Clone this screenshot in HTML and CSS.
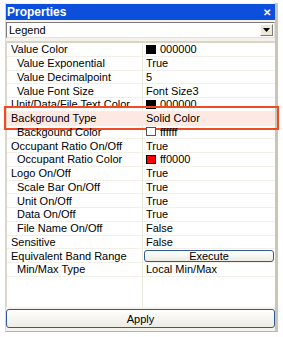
FILE: index.html
```html
<!DOCTYPE html>
<html lang="en">
  <head>
    <meta charset="UTF-8" />
    <title>Properties</title>
    <link rel="stylesheet" href="styles.css">
  </head>
  <body>
    <div class="panel">
      <div class="title-bar">
        <span class="title">Properties</span>
        <span class="close">&#x2715;</span>
      </div>
      <div class="combo">
        <span class="combo-text">Legend</span>
        <span class="combo-btn">
          <svg width="7" height="4" viewBox="0 0 7 4"><polygon points="0,0 7,0 3.5,4" fill="#000"/></svg>
        </span>
      </div>
      <div class="grid">
        <div class="row"><span class="name">Value Color</span><span class="value"><i class="swatch black"></i>000000</span></div>
        <div class="row"><span class="name sub">Value Exponential</span><span class="value">True</span></div>
        <div class="row"><span class="name sub">Value Decimalpoint</span><span class="value">5</span></div>
        <div class="row"><span class="name sub">Value Font Size</span><span class="value">Font Size3</span></div>
        <div class="row"><span class="name">Unit/Data/File Text Color</span><span class="value"><i class="swatch black"></i>000000</span></div>
        <div class="row marked"><span class="name">Background Type</span><span class="value">Solid Color</span></div>
        <div class="row"><span class="name sub">Backgound Color</span><span class="value"><i class="swatch white"></i>ffffff</span></div>
        <div class="row"><span class="name">Occupant Ratio On/Off</span><span class="value">True</span></div>
        <div class="row"><span class="name sub">Occupant Ratio Color</span><span class="value"><i class="swatch red"></i>ff0000</span></div>
        <div class="row"><span class="name">Logo On/Off</span><span class="value">True</span></div>
        <div class="row"><span class="name sub">Scale Bar On/Off</span><span class="value">True</span></div>
        <div class="row"><span class="name sub">Unit On/Off</span><span class="value">True</span></div>
        <div class="row"><span class="name sub">Data On/Off</span><span class="value">True</span></div>
        <div class="row"><span class="name sub">File Name On/Off</span><span class="value">False</span></div>
        <div class="row"><span class="name">Sensitive</span><span class="value">False</span></div>
        <div class="row"><span class="name">Equivalent Band Range</span><span class="value"><button class="exec-btn">Execute</button></span></div>
        <div class="row"><span class="name sub">Min/Max Type</span><span class="value">Local Min/Max</span></div>
      </div>
      <button class="apply-btn">Apply</button>
    </div>
  </body>
</html>
```

FILE: styles.css
```css
body {
  margin: 0;
  background: #ffffff;
  font-family: "Liberation Sans", Arial, sans-serif;
  font-size: 11px;
  color: #000;
}
.panel {
  width: 273px;
  height: 329px;
  margin: 3px 0 0 5px;
  box-sizing: border-box;
  border-right: 3px solid #c9c6b8;
  border-bottom: 1px solid #b8b5a8;
  border-left: 1px solid #dcdad0;
  background: #f4f2ea;
  display: flex;
  flex-direction: column;
}
.title-bar {
  height: 16px;
  margin-top: 1px;
  background: #0c4fdc;
  color: #fff;
  display: flex;
  align-items: center;
  justify-content: space-between;
  padding: 0 4px 0 1px;
}
.title {
  font-weight: bold;
  font-size: 12px;
}
.close {
  font-size: 10px;
  font-weight: bold;
}
.combo {
  height: 16px;
  margin-top: 2px;
  box-sizing: border-box;
  background: #fff;
  border-top: 1px solid #7a7a7a;
  border-left: 1px solid #7a7a7a;
  border-right: 1px solid #e4e2da;
  border-bottom: 1px solid #e4e2da;
  display: flex;
  align-items: center;
  justify-content: space-between;
  padding-left: 2px;
}
.combo-btn {
  width: 13px;
  height: 12px;
  margin-right: 1px;
  box-sizing: border-box;
  background: #ece9d8;
  border: 1px solid;
  border-color: #fff #7a7a7a #7a7a7a #fff;
  display: flex;
  align-items: center;
  justify-content: center;
}
.grid {
  flex: 1;
  margin-top: 3px;
  box-sizing: border-box;
  border-top: 2px solid #d8d5c8;
  border-left: 1px solid #d8d5c8;
  background: #fff linear-gradient(#ebe8dc, #ebe8dc) no-repeat 135px 0 / 1px 100%;
  padding-top: 0;
}
.row {
  height: 13.75px;
  box-sizing: border-box;
  border-bottom: 1px solid #f1efe7;
  display: flex;
  align-items: center;
  position: relative;
}
.name {
  width: 136px;
  padding-left: 4px;
  box-sizing: border-box;
  white-space: nowrap;
}
.name.sub {
  padding-left: 10px;
}
.value {
  padding-left: 3px;
  display: flex;
  align-items: center;
  flex: 1;
  white-space: nowrap;
}
.swatch {
  display: inline-block;
  width: 10px;
  height: 9px;
  margin-right: 4px;
  box-sizing: border-box;
  border: 1px solid #000;
}
.swatch.black {
  background: #000;
}
.swatch.white {
  background: #fff;
  border-color: #555;
}
.swatch.red {
  background: #ff0000;
}
.marked {
  background: #fde9e2;
}
.marked::after {
  content: "";
  position: absolute;
  left: -3px;
  right: -4px;
  top: -6px;
  bottom: -5px;
  border: 2px solid #ef4a22;
}
.exec-btn {
  width: 130px;
  height: 12px;
  margin-left: -2px;
  padding: 0;
  font-family: inherit;
  font-size: 11px;
  line-height: 10px;
  border: 1px solid #2f5c93;
  border-radius: 3px;
  background: linear-gradient(#ffffff, #ecebe4);
}
.apply-btn {
  height: 19px;
  margin: 2px 0 3px 0;
  font-family: inherit;
  font-size: 11px;
  border: 1px solid #2f5c93;
  border-radius: 3px;
  background: linear-gradient(#ffffff, #ecebe4);
}
```
